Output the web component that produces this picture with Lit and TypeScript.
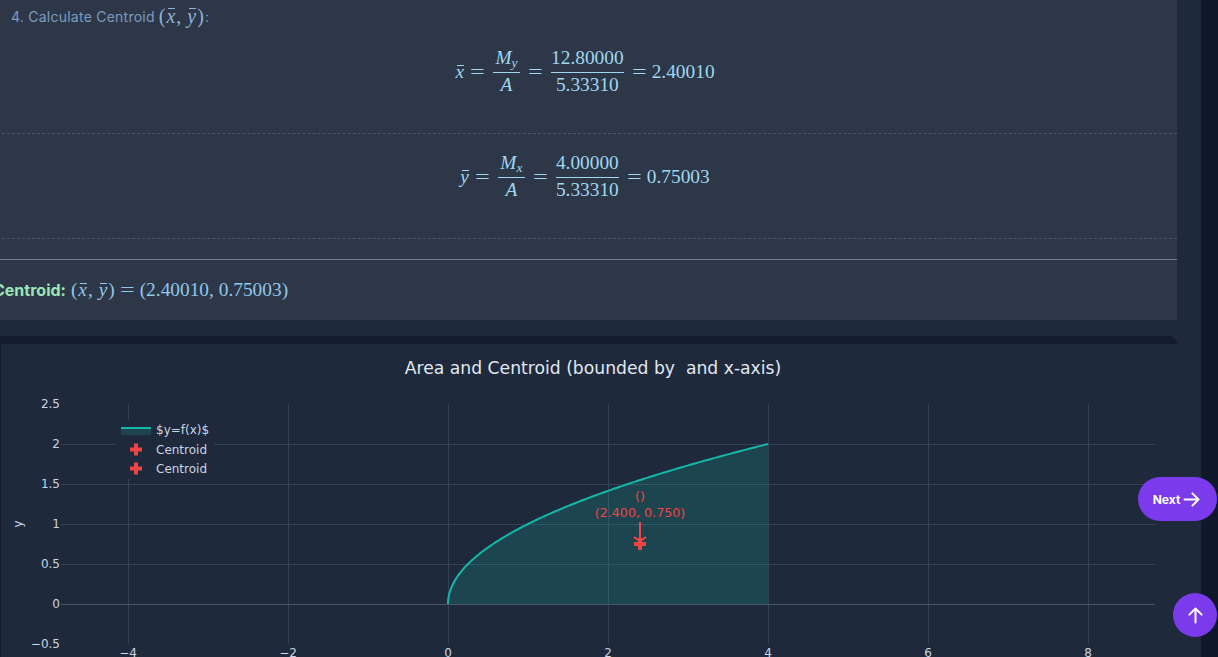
import { LitElement, html, css, svg } from "lit";
import { customElement } from "lit/decorators.js";

const bar = (v: string) => html`<span class="bar"><i>${v}</i></span>`;
const eq = html`<span class="eq"><span class="eqg">=</span></span>`;
const frac = (a: unknown, b: unknown) =>
  html`<span class="frac"><span class="num">${a}</span><span class="den">${b}</span></span>`;

const X = (v: number) => 448 + 80 * v;
const Y = (v: number) => 604 - 80 * v;
const xticks = [-4, -2, 0, 2, 4, 6, 8];
const yticks = [2.5, 2, 1.5, 1, 0.5, 0, -0.5];
const curvePts = () => {
  const p: string[] = [];
  for (let i = 0; i <= 200; i++) {
    const x = 4 * (i / 200) ** 2;
    p.push(`${X(x).toFixed(2)},${Y(Math.sqrt(x)).toFixed(2)}`);
  }
  return p.join(" ");
};
const fmt = (v: number) => (v < 0 ? "\u2212" + Math.abs(v) : String(v));
const plus = (cx: number, cy: number) =>
  `M${cx - 2} ${cy - 6}h4v4h4v4h-4v4h-4v-4h-4v-4h4z`;

@customElement("app-root")
export class AppRoot extends LitElement {
  static styles = css`
    :host {
      display: block;
      width: 1218px;
      height: 657px;
      overflow: hidden;
      position: relative;
      background: #0f172a;
      font-family: "Inter", "Liberation Sans", sans-serif;
    }
    .main {
      width: 1201px;
      height: 657px;
      background: #1e293b;
      overflow: hidden;
    }
    .card {
      margin-left: -8px;
      width: 1185px;
      height: 320px;
      box-sizing: border-box;
      background: #2d3748;
      display: flex;
      flex-direction: column;
      overflow: hidden;
    }
    .head {
      height: 29px;
      flex: none;
      box-sizing: border-box;
      padding: 4px 0 0 19px;
      font-size: 14px;
      letter-spacing: 0.24px;
      line-height: 24px;
      color: #7d9cc0;
      display: flex;
      align-items: center;
      gap: 4px;
    }
    .hm {
      font-family: "Liberation Serif", serif;
      font-size: 20px;
      letter-spacing: 0;
      color: #8db4d6;
      margin-top: -1px;
      white-space: pre;
    }
    .colon { margin-left: -3px; }
    .row {
      height: 105px;
      flex: none;
      box-sizing: border-box;
      border-bottom: 1px dashed #4a5568;
      display: flex;
      justify-content: center;
      padding-top: 14px;
    }
    .math {
      font-family: "Liberation Serif", serif;
      font-size: 19.36px;
      color: #9fd8f0;
      display: inline-flex;
      align-items: center;
      height: 58px;
      white-space: pre;
    }
    .eq {
      display: inline-block;
      width: 15px;
      margin: 0 5px;
      text-align: center;
    }
    .eqg {
      display: inline-block;
      transform: scaleX(1.35);
    }
    .frac {
      display: inline-flex;
      flex-direction: column;
      align-items: stretch;
      margin: 0 3px;
      min-width: 27px;
    }
    .num, .den {
      display: flex;
      align-items: center;
      justify-content: center;
      box-sizing: border-box;
    }
    .num {
      height: 28px;
      border-bottom: 1px solid #9fd8f0;
      padding-bottom: 2px;
    }
    .den {
      height: 26px;
      padding-bottom: 3px;
    }
    sub {
      font-size: 13.5px;
      font-style: italic;
      line-height: 0;
      position: relative;
      top: 3px;
      vertical-align: baseline;
    }
    .bar {
      position: relative;
      display: inline-block;
      padding: 0 1px;
    }
    .bar::before {
      content: "";
      position: absolute;
      left: 22%;
      right: 10%;
      top: 0.22em;
      height: 1px;
      background: currentColor;
    }
    .result {
      margin: 20px 0 0 0;
      border-top: 1px solid #718096;
      padding-left: 1px;
      height: 60px;
      flex: none;
      display: flex;
      align-items: center;
      gap: 5px;
      font-size: 16px;
      font-weight: 700;
      color: #9ae6b4;
    }
    .rm {
      font-family: "Liberation Serif", serif;
      font-weight: 400;
      font-size: 19.36px;
      color: #90c8ea;
      white-space: pre;
    }
    .plotcard {
      margin-top: 16px;
      width: 1177px;
      height: 321px;
      box-sizing: border-box;
      background: #131b2e;
      border-radius: 0 8px 0 0;
      padding: 8px 0 0 1px;
    }
    .plot { display: block; width: 1176px; height: 313px; background: #1e293b; }
    .t { font-family: "DejaVu Sans", sans-serif; font-size: 12px; fill: #cbd5e1; }
    .title {
      font-family: "DejaVu Sans", sans-serif;
      font-size: 17.2px;
      fill: #e2e8f0;
      white-space: pre;
    }
    .ann { font-family: "DejaVu Sans", sans-serif; font-size: 12.7px; fill: #ef4444; }
    .btn {
      position: absolute;
      background: #7c3aed;
      color: #fff;
      display: flex;
      align-items: center;
      justify-content: center;
    }
    .next {
      left: 1138px;
      top: 477px;
      width: 79px;
      height: 44px;
      border-radius: 22px;
      gap: 1px;
      font-size: 12px;
      font-weight: 700;
    }
    .up {
      left: 1173px;
      top: 593px;
      width: 44px;
      height: 44px;
      border-radius: 50%;
    }
  `;

  private plot() {
    return svg`
      <g stroke="#334155" stroke-width="1" fill="none">
        ${xticks.map((v) => svg`<line x1=${X(v) + 0.5} x2=${X(v) + 0.5} y1="404" y2="644"></line>`)}
        ${yticks
          .filter((v) => v !== 2.5 && v !== -0.5 && v !== 0)
          .map((v) => svg`<line x1="61" x2="1155" y1=${Y(v) + 0.5} y2=${Y(v) + 0.5}></line>`)}
        <line x1="61" x2="1155" y1="604.5" y2="604.5" stroke="#475569"></line>
      </g>
      <polygon points="${curvePts()} 768,604 448,604" fill="#14b8a6" fill-opacity="0.2"></polygon>
      <polyline points=${curvePts()} fill="none" stroke="#14b8a6" stroke-width="2"></polyline>
      <rect x="116" y="420" width="98" height="59" fill="#1e293b"></rect>
      <rect x="121" y="428" width="30" height="7" fill="#14b8a6" fill-opacity="0.2"></rect>
      <line x1="121" x2="151" y1="428" y2="428" stroke="#14b8a6" stroke-width="2"></line>
      <path d=${plus(136, 449.5)} fill="#ef4444"></path>
      <path d=${plus(136, 468.5)} fill="#ef4444"></path>
      <text class="t" x="156" y="434">$y=f(x)$</text>
      <text class="t" x="156" y="454">Centroid</text>
      <text class="t" x="156" y="473">Centroid</text>
      <text class="title" x="593" y="374" text-anchor="middle">Area and Centroid (bounded by  and x-axis)</text>
      ${yticks.map((v) => svg`<text class="t" x="60" y=${Y(v) + 3.5} text-anchor="end">${fmt(v)}</text>`)}
      ${xticks.map((v) => svg`<text class="t" x=${X(v)} y="657" text-anchor="middle">${fmt(v)}</text>`)}
      <text class="t" transform="translate(22 524) rotate(-90)" text-anchor="middle">y</text>
      <text class="ann" x="640" y="500" text-anchor="middle">()</text>
      <text class="ann" x="640" y="517" text-anchor="middle">(2.400, 0.750)</text>
      <line x1="640" x2="640" y1="522" y2="541" stroke="#ef4444" stroke-width="2"></line>
      <path d="M634 537l6 4 6-4" fill="none" stroke="#ef4444" stroke-width="2"></path>
      <path d=${plus(640, 544)} fill="#ef4444"></path>
    `;
  }

  render() {
    return html`
      <div class="main">
        <section class="card">
          <div class="head">
            <span>4. Calculate Centroid</span>
            <span class="hm">(${bar("x")}, ${bar("y")})</span><span class="colon">:</span>
          </div>
          <div class="row">
            <span class="math">${bar("x")}${eq}${frac(html`<span><i>M</i><sub>y</sub></span>`, html`<i>A</i>`)}${eq}${frac("12.80000", "5.33310")}${eq}<span>2.40010</span></span>
          </div>
          <div class="row">
            <span class="math">${bar("y")}${eq}${frac(html`<span><i>M</i><sub>x</sub></span>`, html`<i>A</i>`)}${eq}${frac("4.00000", "5.33310")}${eq}<span>0.75003</span></span>
          </div>
          <div class="result">
            <span>Centroid:</span>
            <span class="rm">(${bar("x")}, ${bar("y")})${eq}(2.40010, 0.75003)</span>
          </div>
        </section>
        <section class="plotcard">
          <svg class="plot" viewBox="1 344 1176 313" preserveAspectRatio="none">${this.plot()}</svg>
        </section>
      </div>
      <div class="btn next">
        <span>Next</span>
        <svg width="21" height="21" viewBox="0 0 24 24" fill="none" stroke="currentColor" stroke-width="2.3" stroke-linecap="round" stroke-linejoin="round">
          <path d="M4 12h16M13 5l7 7-7 7"></path>
        </svg>
      </div>
      <div class="btn up">
        <svg width="21" height="21" viewBox="0 0 24 24" fill="none" stroke="currentColor" stroke-width="2.3" stroke-linecap="round" stroke-linejoin="round">
          <path d="M12 20V4M5 11l7-7 7 7"></path>
        </svg>
      </div>
    `;
  }
}
